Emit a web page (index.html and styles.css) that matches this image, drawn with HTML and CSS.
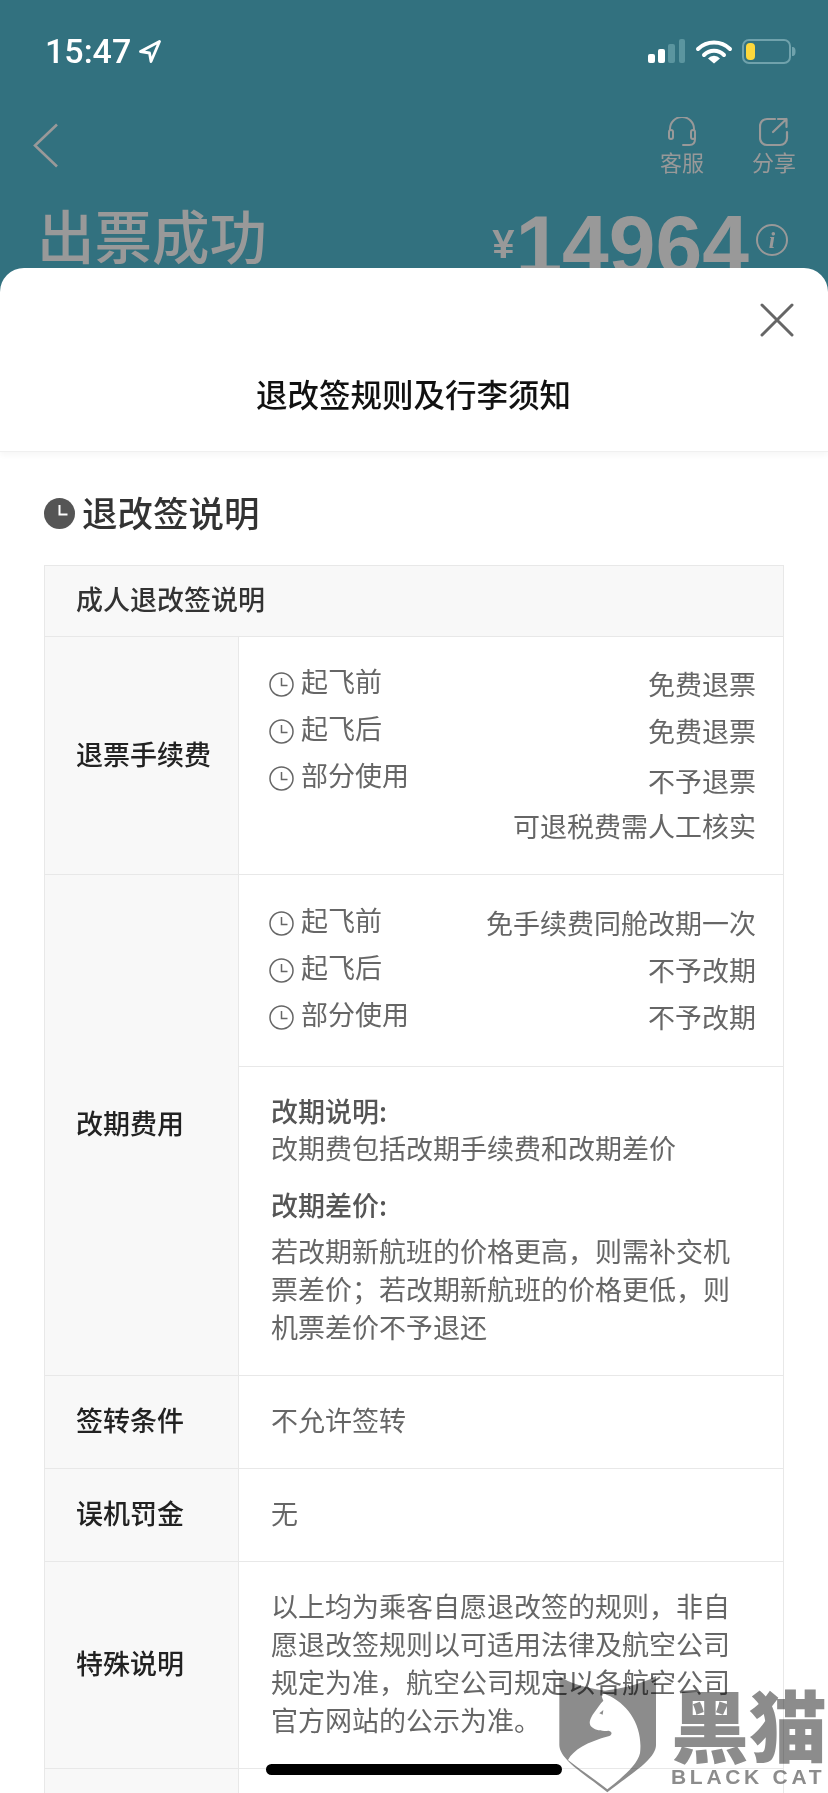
FILE: index.html
```html
<!DOCTYPE html>
<html lang="zh-CN">
<head>
<meta charset="utf-8">
<title>退改签规则及行李须知</title>
<link rel="stylesheet" href="styles.css">
</head>
<body>
<div class="phone">
  <header class="top">
    <div class="status">
      <div class="clock">
        <span class="time">15:47</span>
        <svg class="loc" width="22" height="23" viewBox="0 0 22 23"><path d="M20.500 1.500 1.500 11.500l9 1.500 1.500 8.500z" fill="none" stroke="#fff" stroke-width="2.800" stroke-linejoin="round"/></svg>
      </div>
      <svg class="sys" width="149" height="26" viewBox="0 0 149 26">
        <rect x="0" y="16" width="7" height="9" rx="2" fill="#fff"/>
        <rect x="10" y="11" width="7" height="14" rx="2" fill="#fff"/>
        <rect x="20" y="6" width="7" height="19" rx="2" fill="#5b959f"/>
        <rect x="31" y="1" width="6" height="24" rx="2" fill="#5b959f"/>
        <path d="M50 11a23 23 0 0 1 32 0" fill="none" stroke="#fff" stroke-width="4" stroke-linecap="round"/>
        <path d="M56 17a14 14 0 0 1 20 0" fill="none" stroke="#fff" stroke-width="4" stroke-linecap="round"/>
        <path d="M60 20.500a8 8 0 0 1 12 0L66 25.500z" fill="#fff"/>
        <rect x="95" y="2" width="47" height="23" rx="6" fill="none" stroke="#70a2ac" stroke-width="2"/>
        <rect x="98" y="5" width="9" height="17" rx="4" fill="#fdd83c"/>
        <path d="M144 9c3 0 3.500 2 3.500 4.500s-.5 4.500-3.500 4.500z" fill="#70a2ac"/>
      </svg>
    </div>
    <nav class="nav">
      <svg class="back" width="26" height="45" viewBox="0 0 26 45"><path d="M24 1.500 2 22.500l22 21" fill="none" stroke="#999" stroke-width="2.600"/></svg>
      <div class="actions">
        <div class="action">
          <svg width="30" height="30" viewBox="0 0 30 30" fill="none" stroke="#999" stroke-width="2" stroke-linecap="round"><path d="M3 13V12a12 12 0 0 1 24 0v1"/><rect x="2" y="13" width="4" height="9" rx="2"/><rect x="24" y="13" width="4" height="9" rx="2"/><path d="M28 20v2c0 4-2.500 6-5.500 6H16"/></svg>
          <span>客服</span>
        </div>
        <div class="action">
          <svg width="30" height="30" viewBox="0 0 30 30" fill="none" stroke="#999" stroke-width="2.200" stroke-linecap="round" stroke-linejoin="round"><path d="M16 2H8a7 7 0 0 0-7 7v12a7 7 0 0 0 7 7h13a7 7 0 0 0 7-7v-6"/><path d="M14 15 27.500 2M19 2h8.500v8"/></svg>
          <span>分享</span>
        </div>
      </div>
    </nav>
    <div class="summary">
      <h1 class="state">出票成功</h1>
      <div class="price">
        <span class="yen">¥</span><span class="amount">14964</span>
        <span class="info"><i>i</i></span>
      </div>
    </div>
  </header>

  <main class="sheet">
    <div class="sheet-head">
      <svg class="close" width="34" height="34" viewBox="0 0 34 34"><path d="M2 2l30 30M32 2 2 32" stroke="#666" stroke-width="3" stroke-linecap="round"/></svg>
      <h2 class="sheet-title">退改签规则及行李须知</h2>
    </div>
    <div class="sheet-body">
      <h3 class="section">
        <svg width="31" height="31" viewBox="0 0 31 31"><circle cx="15.500" cy="15.500" r="15.500" fill="#555"/><path d="M15.500 7v9.500h8" fill="none" stroke="#fff" stroke-width="2"/></svg>
        退改签说明
      </h3>
      <section class="table">
        <div class="table-head">成人退改签说明</div>

        <div class="row">
          <div class="label">退票手续费</div>
          <div class="value">
            <div class="rules rules-first">
              <div class="rule"><span class="when"><svg class="ico" viewBox="0 0 25 25"><circle cx="12.500" cy="12.500" r="11.500"/><path d="M12.500 6v7.500h6"/></svg>起飞前</span><span class="res">免费退票</span></div>
              <div class="rule"><span class="when"><svg class="ico" viewBox="0 0 25 25"><circle cx="12.500" cy="12.500" r="11.500"/><path d="M12.500 6v7.500h6"/></svg>起飞后</span><span class="res">免费退票</span></div>
              <div class="rule"><span class="when"><svg class="ico" viewBox="0 0 25 25"><circle cx="12.500" cy="12.500" r="11.500"/><path d="M12.500 6v7.500h6"/></svg>部分使用</span><span class="res res-low">不予退票<br>可退税费需人工核实</span></div>
            </div>
          </div>
        </div>

        <div class="row">
          <div class="label">改期费用</div>
          <div class="value">
            <div class="rules rules-second">
              <div class="rule"><span class="when"><svg class="ico" viewBox="0 0 25 25"><circle cx="12.500" cy="12.500" r="11.500"/><path d="M12.500 6v7.500h6"/></svg>起飞前</span><span class="res">免手续费同舱改期一次</span></div>
              <div class="rule"><span class="when"><svg class="ico" viewBox="0 0 25 25"><circle cx="12.500" cy="12.500" r="11.500"/><path d="M12.500 6v7.500h6"/></svg>起飞后</span><span class="res">不予改期</span></div>
              <div class="rule"><span class="when"><svg class="ico" viewBox="0 0 25 25"><circle cx="12.500" cy="12.500" r="11.500"/><path d="M12.500 6v7.500h6"/></svg>部分使用</span><span class="res">不予改期</span></div>
            </div>
            <div class="notes">
              <p class="note-title">改期说明:</p>
              <p class="note-line">改期费包括改期手续费和改期差价</p>
              <p class="note-title note-gap">改期差价:</p>
              <p class="note-para">若改期新航班的价格更高，则需补交机票差价；若改期新航班的价格更低，则机票差价不予退还</p>
            </div>
          </div>
        </div>

        <div class="row">
          <div class="label">签转条件</div>
          <div class="value plain">不允许签转</div>
        </div>
        <div class="row">
          <div class="label">误机罚金</div>
          <div class="value plain">无</div>
        </div>
        <div class="row">
          <div class="label">特殊说明</div>
          <div class="value para">以上均为乘客自愿退改签的规则，非自愿退改签规则以可适用法律及航空公司规定为准，航空公司规定以各航空公司官方网站的公示为准。</div>
        </div>
        <div class="row row-tail">
          <div class="label"></div>
          <div class="value"></div>
        </div>
      </section>
    </div>
  </main>

  <div class="home-bar"></div>

  <div class="watermark">
    <svg class="wm-shield" width="120" height="123" viewBox="0 0 360 369">
      <path d="M28 18C60 40 100 52 165 62 210 56 270 45 318 18V225C318 270 230 320 172 367 115 320 28 270 28 225z" fill="#8c8c8c"/>
      <path d="M155 66 170 74C235 100 280 170 270 250 262 285 215 325 172 358 130 325 85 295 54 270 70 240 110 216 178 198 188 192 186 184 176 182 155 184 135 182 122 168 116 158 120 148 128 134 140 118 150 102 160 92 156 84 154 74 155 66z" fill="#fff"/>
      <path d="M148 130l12-10-2 14z" fill="#8c8c8c"/>
    </svg>
    <div class="wm-text">
      <span class="wm-cn">黑猫</span>
      <span class="wm-en">BLACK CAT</span>
    </div>
  </div>
</div>
</body>
</html>
```

FILE: styles.css
```css
* { box-sizing: border-box; }
html, body { margin: 0; padding: 0; }
body { width: 828px; height: 1793px; overflow: hidden; font-family: "Noto Sans CJK SC", "Noto Sans", sans-serif; }
h1, h2, h3, p { margin: 0; font-weight: inherit; font-size: inherit; }

.phone { position: relative; width: 828px; height: 1793px; overflow: hidden; background: #32717f; display: flex; flex-direction: column; }

.top { height: 268px; flex: none; color: #999; }
.status { height: 117px; padding: 38px 32px 0 45px; display: flex; justify-content: space-between; align-items: flex-start; }
.clock { display: flex; align-items: center; height: 26px; gap: 8px; }
.time { font-family: Roboto, sans-serif; font-weight: 500; font-size: 34px; line-height: 26px; color: #fff; }
.loc { flex: none; }
.sys { display: block; margin-right: -1px; }

.nav { height: 77px; padding: 0 32px 0 33px; display: flex; justify-content: space-between; align-items: flex-start; }
.back { display: block; margin-top: 6px; }
.actions { display: flex; gap: 48px; }
.action { display: flex; flex-direction: column; align-items: center; width: 44px; }
.action svg { display: block; }
.action span { font-size: 22px; line-height: 32px; margin-top: -2px; white-space: nowrap; }

.summary { height: 74px; padding: 12px 40px 0 37px; display: flex; justify-content: space-between; align-items: flex-start; }
.state { font-size: 57.500px; line-height: 56px; font-weight: 500; }
.price { display: flex; align-items: flex-start; position: relative; }
.yen { font-family: "Liberation Sans", sans-serif; font-weight: 700; font-size: 40px; line-height: 40px; margin-top: 18px; margin-right: 1px; }
.amount { font-family: "Liberation Sans", sans-serif; font-weight: 700; font-size: 84px; line-height: 84px; margin-top: -3px; }
.info { width: 32px; height: 32px; margin: 18px 0 0 7px; border: 2px solid #999; border-radius: 50%; display: flex; align-items: center; justify-content: center; }
.info i { font-family: "Liberation Serif", serif; font-weight: 700; font-style: italic; font-size: 23px; line-height: 1; }

.sheet { flex: 1; min-height: 0; position: relative; background: #fff; border-radius: 24px 24px 0 0; overflow: hidden; }
.sheet-head { height: 184px; padding: 35px 34px 0 0; display: flex; flex-direction: column; border-bottom: 1px solid #f0f0f0; box-shadow: 0 3px 6px rgba(0, 0, 0, 0.04); }
.close { display: block; align-self: flex-end; }
.sheet-title { margin: 36px -34px 0 -1px; font-size: 31.500px; line-height: 40px; font-weight: 500; color: #111; text-align: center; }

.sheet-body { padding: 35px 44px 0; }
.section { display: flex; align-items: center; gap: 7px; height: 50px; font-size: 35.500px; line-height: 50px; font-weight: 500; color: #333; }
.section svg { flex: none; margin-top: 3px; }

.table { margin-top: 28px; width: 740px; border: 1px solid #e8e8e8; border-bottom: 0; }
.table-head { height: 71px; padding-left: 31px; font-size: 27px; line-height: 66px; font-weight: 500; color: #333; background: #f8f8f8; border-bottom: 1px solid #e8e8e8; }
.row { display: grid; grid-template-columns: 194px 1fr; border-bottom: 1px solid #e8e8e8; }
.label { display: flex; align-items: center; padding: 0 0 5px 31px; font-size: 27px; font-weight: 500; color: #222; background: #f8f8f8; border-right: 1px solid #e8e8e8; }
.value { font-size: 27px; color: #666; }

.rules { padding: 0 27px 0 30px; }
.rules-first { padding-top: 24px; padding-bottom: 26px; }
.rules-second { padding-top: 25px; padding-bottom: 25px; border-bottom: 1px solid #e8e8e8; }
.rule { display: flex; justify-content: space-between; align-items: flex-start; }
.when { display: flex; align-items: flex-start; line-height: 40px; height: 47px; white-space: nowrap; }
.ico { width: 25px; height: 25px; flex: none; margin-right: 7px; margin-top: 11px; fill: none; stroke: #666; stroke-width: 1.500; }
.res { line-height: 47px; margin-top: -1px; text-align: right; white-space: nowrap; }
.res-low { margin-top: 0; padding-top: 3px; line-height: 45px; }

.notes { padding: 25px 47px 29px 32px; }
.note-title { line-height: 37px; font-weight: 500; color: #555; }
.note-line { line-height: 37px; }
.note-gap { margin-top: 20px; }
.note-para { margin-top: 9px; line-height: 38px; }

.plain { display: flex; align-items: center; height: 92px; padding: 0 0 6px 32px; }
.para { padding: 25px 47px 29px 32px; line-height: 38px; }
.row-tail { height: 80px; }

.home-bar { position: absolute; left: 266px; top: 1764px; width: 296px; height: 11px; border-radius: 6px; background: #000; }

.watermark { position: absolute; left: 550px; top: 1670px; width: 278px; height: 123px; mix-blend-mode: multiply; color: #8c8c8c; }
.wm-shield { position: absolute; left: 0; top: 0; display: block; }
.wm-text { position: absolute; left: 121px; top: 10px; width: 157px; display: flex; flex-direction: column; }
.wm-cn { font-family: "Noto Sans CJK SC", sans-serif; font-weight: 900; font-size: 78px; line-height: 86px; white-space: nowrap; }
.wm-en { font-family: "Liberation Sans", sans-serif; font-weight: 700; font-size: 21px; line-height: 22px; letter-spacing: 3.700px; white-space: nowrap; }
```
